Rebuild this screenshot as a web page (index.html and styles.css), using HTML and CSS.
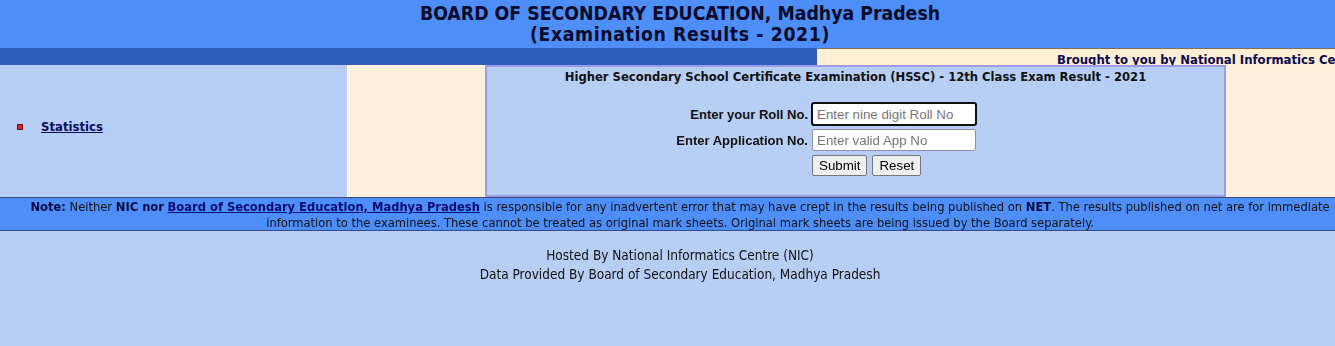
FILE: index.html
```html
<!DOCTYPE html>
<html lang="en">
<head>
    <meta charset="UTF-8" />
    <title>MP Board Results 2021</title>
    <link rel="stylesheet" href="styles.css">
</head>
<body>
  <div class="page">
    <div class="top">
        <h1>BOARD OF SECONDARY EDUCATION, Madhya Pradesh<br><span class="sub">(Examination Results - 2021)</span></h1>
    </div>

    <div class="strip">
        <div class="strip-left"></div>
        <div class="strip-right">
            <span class="marquee">Brought to you by National Informatics Centre, Madhya Pradesh State Centre</span>
        </div>
    </div>

    <div class="main">
        <div class="menu">
            <ul>
                <li><a href="#">Statistics</a></li>
            </ul>
        </div>
        <div class="side side-left"></div>
        <div class="result-box">
            <div class="exam-title">Higher Secondary School Certificate Examination (HSSC) - 12th Class Exam Result - 2021</div>
            <form class="result-form" onsubmit="return false;">
                <label for="rollNo">Enter your Roll No.</label>
                <input type="text" id="rollNo" placeholder="Enter nine digit Roll No" autofocus>
                <label for="appNo">Enter Application No.</label>
                <input type="text" id="appNo" placeholder="Enter valid App No">
                <span></span>
                <div class="buttons">
                    <button type="submit">Submit</button>
                    <button type="reset">Reset</button>
                </div>
            </form>
        </div>
        <div class="side side-right"></div>
    </div>

    <div class="note">
        <b>Note:</b> Neither <b>NIC nor</b> <a href="#">Board of Secondary Education, Madhya Pradesh</a> is responsible for any inadvertent error that may have crept in the results being published on <b>NET</b>. The results published on net are for immediate information to the examinees. These cannot be treated as original mark sheets. Original mark sheets are being issued by the Board separately.
    </div>

    <div class="footer">
        Hosted By National Informatics Centre (NIC)<br>
        Data Provided By Board of Secondary Education, Madhya Pradesh
    </div>
  </div>
</body>
</html>
```

FILE: styles.css
```css
html {
    overflow: hidden;
}

body {
    margin: 0;
    background: #b8cff5;
    font-family: 'DejaVu Sans Condensed', 'DejaVu Sans', sans-serif;
    color: #111;
}

.page {
    width: 1360px;
}

.top {
    background: #4d8ef8;
    height: 48px;
    text-align: center;
}

.top h1 {
    margin: 0;
    padding-top: 3px;
    font-size: 19.3px;
    line-height: 21px;
    color: #0a0a2a;
}

.top .sub {
    letter-spacing: 0.6px;
}

.strip {
    display: flex;
    height: 17px;
}

.strip-left {
    width: 817px;
    background: #2f5fbf;
}

.strip-right {
    flex: 1;
    background: #ffefd5;
    border-top: 1px solid #8a6a50;
    overflow: hidden;
    white-space: nowrap;
}

.marquee {
    display: inline-block;
    margin-left: 240px;
    font-size: 13px;
    font-weight: bold;
    line-height: 16px;
    color: #0a0a50;
}

.main {
    display: flex;
    height: 132px;
}

.menu {
    width: 347px;
    background: #b8cff5;
}

.menu ul {
    margin: 0;
    padding: 54px 0 0 17px;
    list-style: none;
}

.menu li {
    display: flex;
    align-items: center;
}

.menu li::before {
    content: '';
    width: 4px;
    height: 4px;
    background: #e0202a;
    border: 1px solid #6a1010;
    margin-right: 18px;
}

.menu a {
    color: #0a0a60;
    font-weight: bold;
    font-size: 13px;
}

.side {
    background: #fdf0dc;
}

.side-left {
    width: 137px;
    border-left: 1px solid #fff;
}

.side-right {
    flex: 1;
}

.result-box {
    width: 737px;
    background: #b8cff5;
    border: 2px solid #9b9be6;
    text-align: center;
}

.exam-title {
    font-size: 12.9px;
    font-weight: bold;
    margin-top: 2px;
    color: #111;
}

.result-form {
    display: grid;
    grid-template-columns: 321px 165px;
    column-gap: 4px;
    row-gap: 4px;
    align-items: center;
    margin-top: 19px;
    font-family: 'Liberation Sans', Arial, sans-serif;
}

.result-form label {
    text-align: right;
    font-weight: bold;
    font-size: 13px;
}

.result-form input {
    width: 164px;
    height: 22px;
    box-sizing: border-box;
    border: 1px solid #8f8f9d;
    border-radius: 2px;
    padding: 1px 4px;
    font-size: 13.33px;
    font-family: 'Liberation Sans', Arial, sans-serif;
    background: #fff;
}

.result-form input:focus {
    outline: 2px solid #101010;
    outline-offset: -1px;
}

.buttons {
    display: flex;
    gap: 5px;
}

.buttons button {
    font-family: 'Liberation Sans', Arial, sans-serif;
    font-size: 13.33px;
    height: 21px;
    padding: 1px 6px;
    background: #efefef;
    border: 1px solid #767676;
    border-radius: 2px;
}

.note {
    background: #4d8ef8;
    border-top: 1px solid #3a4a80;
    border-bottom: 1px solid #3a4a80;
    text-align: center;
    font-size: 12.8px;
    line-height: 16px;
    padding: 1px 4px 0;
    color: #111;
    height: 34px;
    box-sizing: border-box;
}

.note b {
    color: #0a0a40;
}

.note a {
    color: #0a0a70;
    font-weight: bold;
}

.footer {
    text-align: center;
    font-size: 13.5px;
    line-height: 19px;
    padding-top: 15px;
    color: #111;
}
```
